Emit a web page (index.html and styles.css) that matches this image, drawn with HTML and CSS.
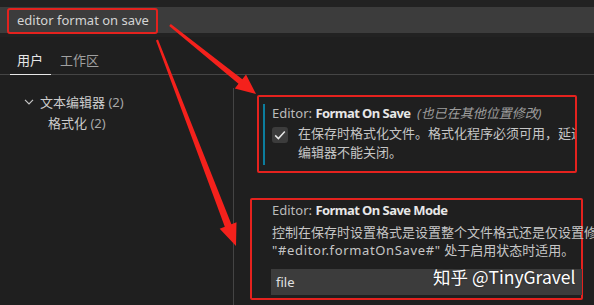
FILE: index.html
```html
<!DOCTYPE html>
<html lang="zh-CN">

<head>
  <meta charset="UTF-8">
  <meta name="viewport" content="width=device-width, initial-scale=1.0">
  <title>设置</title>
  <link rel="stylesheet" href="styles.css">
</head>

<body>
  <div class="page">
    <div class="search-bar">
      <div class="search-input">
        <span class="mark">editor format on save</span>
      </div>
    </div>

    <div class="tabs">
      <div class="tab active">用户</div>
      <div class="tab">工作区</div>
    </div>

    <div class="main">
      <div class="toc">
        <div class="toc-row">
          <svg class="chevron" width="10" height="6" viewBox="0 0 10 6">
            <path d="M1 0.8 L5 4.8 L9 0.8" fill="none" stroke="#c5c5c5" stroke-width="1.2" />
          </svg>
          <span>文本编辑器</span>&nbsp;<span class="count">(2)</span>
        </div>
        <div class="toc-row sub">
          <span>格式化</span>&nbsp;<span class="count">(2)</span>
        </div>
      </div>

      <div class="settings">
        <!-- 红框标注 1 -->
        <div class="mark-box box-1">
          <div class="setting modified">
            <div class="setting-title">
              <span class="cat">Editor: </span><span class="label">Format On Save</span>
              <span class="other">(也已在其他位置修改)</span>
            </div>
            <div class="bool-row">
              <span class="checkbox">
                <svg width="16" height="16" viewBox="0 0 16 16">
                  <path d="M3.2 8.4 L6.4 11.6 L12.8 4.6" fill="none" stroke="#e6e6e6" stroke-width="1.5" />
                </svg>
              </span>
              <div class="desc">
                <div>在保存时格式化文件。格式化程序必须可用，延迟后文件不能自动保存，并且</div>
                <div>编辑器不能关闭。</div>
              </div>
            </div>
          </div>
        </div>

        <!-- 红框标注 2 -->
        <div class="mark-box box-2">
          <div class="setting">
            <div class="setting-title">
              <span class="cat">Editor: </span><span class="label">Format On Save Mode</span>
            </div>
            <div class="desc">
              <div>控制在保存时设置格式是设置整个文件格式还是仅设置修改。仅当</div>
              <div><span class="code">"#editor.formatOnSave#"</span> 处于启用状态时适用。</div>
            </div>
            <div class="select">file</div>
          </div>
        </div>
      </div>
    </div>

    <!-- 标注箭头 -->
    <svg class="arrows" width="594" height="305" viewBox="0 0 594 305">
      <polygon points="169.2,26 170.8,24 242.3,79.2 246,74.5 256,94 234.8,88.5 238.5,83.8" />
      <polygon points="156,40.4 158,39.6 231.4,224.2 236.5,222.3 236,246 219.7,228.7 224.8,226.8" />
    </svg>

    <div class="watermark">知乎 @TinyGravel</div>
  </div>
</body>

</html>
```

FILE: styles.css
```css
* {
  box-sizing: border-box;
}

body {
  margin: 0;
  background: #1f1f1f;
  font-family: "Noto Sans", "Noto Sans CJK SC", sans-serif;
  font-size: 13px;
  color: #cccccc;
}

.page {
  position: relative;
  width: 594px;
  height: 305px;
  overflow: hidden;
}

/* 搜索框 */
.search-bar {
  background: #222222;
  padding: 7px 0 4px;
}

.search-input {
  height: 26px;
  background: #3c3c3c;
  padding-left: 7px;
  display: flex;
}

.search-input .mark {
  width: 151px;
  height: 26px;
  margin-top: 1px;
  padding-left: 8px;
  border: 2px solid #e4221e;
  border-radius: 3px;
  line-height: 21px;
  color: #d4d4d4;
}

/* 用户 / 工作区 */
.tabs {
  display: flex;
  padding-left: 10px;
  border-bottom: 1px solid #454545;
}

.tab {
  padding: 14px 8px 5px 7px;
  line-height: 18px;
  color: #a0a0a0;
}

.tab.active {
  color: #e7e7e7;
  border-bottom: 1px solid #e7e7e7;
  margin-bottom: -1px;
}

.tab + .tab {
  padding-left: 9px;
}

.main {
  display: flex;
  margin-top: 13px;
  height: 230px;
}

/* 左侧目录 */
.toc {
  width: 234px;
  flex-shrink: 0;
  padding-top: 3px;
  border-right: 1px solid #444444;
}

.toc-row {
  display: flex;
  align-items: center;
  height: 21px;
  padding-left: 24px;
  white-space: nowrap;
}

.toc-row.sub {
  padding-left: 48px;
}

.chevron {
  margin-right: 6px;
}

.count {
  color: #a8a8a8;
}

/* 右侧设置 */
.settings {
  flex: 1;
  min-width: 0;
}

.mark-box {
  border: 2px solid #e4221e;
  border-radius: 2px;
}

.box-1 {
  width: 320px;
  height: 78px;
  margin: 7px 0 0 23px;
  padding: 7px 0 0 4px;
  overflow: hidden;
}

.box-2 {
  width: 333px;
  height: 102px;
  margin: 25px 0 0 16px;
  padding: 1px 0 0 20px;
}

.setting.modified {
  border-left: 2px solid #0c7d9d;
  padding: 0 0 3px 7px;
}

.setting-title {
  line-height: 18px;
  white-space: nowrap;
  color: #bbbbbb;
}

.setting-title .label {
  font-weight: bold;
  letter-spacing: -0.55px;
  color: #e7e7e7;
}

.setting-title .other {
  font-style: italic;
  color: #9d9d9d;
  margin-left: 3px;
}

.bool-row {
  display: flex;
  margin-top: 2px;
}

.checkbox {
  width: 16px;
  height: 16px;
  margin-top: 3px;
  flex-shrink: 0;
  background: #3c3c3c;
  border-radius: 3px;
}

.checkbox svg {
  display: block;
}

.desc {
  white-space: nowrap;
  line-height: 19px;
  color: #c6c6c6;
}

.desc .code {
  letter-spacing: 0.65px;
}

.bool-row .desc {
  margin-left: 10px;
}

.box-2 .desc {
  margin-top: 4px;
  line-height: 18px;
}

.select {
  width: 311px;
  height: 26px;
  margin: 10px 0 0 -1px;
  padding-left: 5px;
  background: #3c3c3c;
  line-height: 26px;
  color: #e0e0e0;
}

/* 标注 */
.arrows {
  position: absolute;
  top: 0;
  left: 0;
  pointer-events: none;
}

.arrows polygon {
  fill: #f4211c;
}

.watermark {
  position: absolute;
  left: 433px;
  top: 266px;
  font-family: "Noto Sans CJK SC", sans-serif;
  font-size: 17.5px;
  line-height: 22px;
  color: #ffffff;
  text-shadow: 0 0 2px rgba(0, 0, 0, .4);
}
```
